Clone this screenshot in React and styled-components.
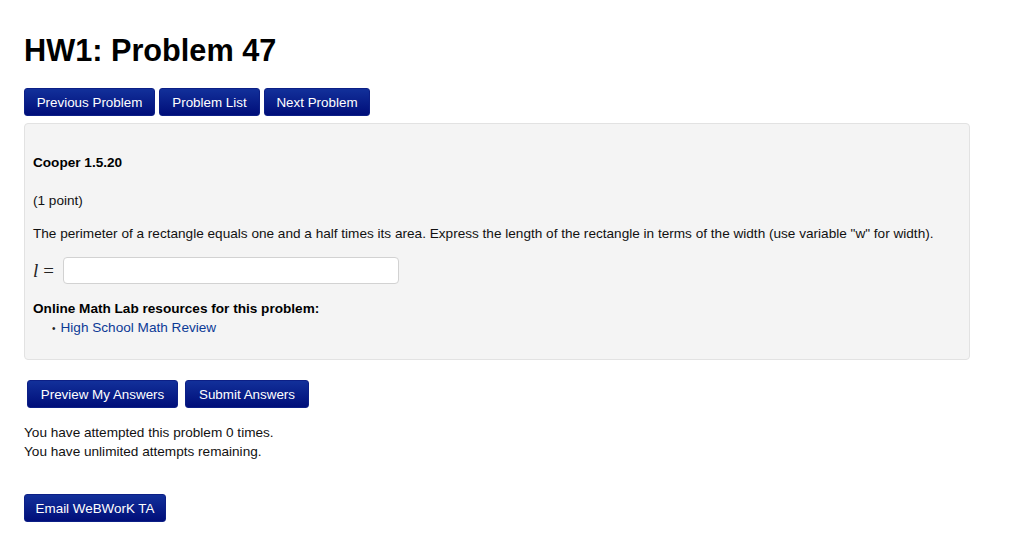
import React from 'react'
import styled, { createGlobalStyle } from 'styled-components'

const GlobalStyle = createGlobalStyle`
	body {
		margin: 0;
		background: #fff;
		font-family: "Liberation Sans", Arial, Helvetica, sans-serif;
		color: #111;
	}
`

const Page = styled.div`
	padding: 0 24px;
	font-size: 13.6px;
	line-height: 19px;
`

const Title = styled.h1`
	font-size: 30.7px;
	line-height: 36px;
	font-weight: bold;
	color: #000;
	margin: 33px 0 19px;
`

const ButtonRow = styled.div`
	display: flex;
	gap: ${props => props.gap || 4}px;
	margin: ${props => props.margin || '0'};
`

const NavButton = styled.button`
	height: 28px;
	padding: 0 8px;
	border: 1px solid #0c1f86;
	border-radius: 3px;
	background: linear-gradient(to bottom, #12309a, #000e79);
	color: #fff;
	font-family: "Liberation Sans", Arial, sans-serif;
	font-size: 13.4px;
	white-space: nowrap;
	cursor: pointer;
	width: ${props => props.width ? props.width + 'px' : 'auto'};
`

const ProblemPanel = styled.div`
	width: 946px;
	box-sizing: border-box;
	margin-top: 7px;
	padding: 29px 8px 21px;
	background: #f4f4f4;
	border: 1px solid #e2e2e2;
	border-radius: 4px;
`

const Bold = styled.div`
	font-weight: bold;
	color: #000;
	margin-top: ${props => props.top || 0}px;
`

const Para = styled.div`
	margin-top: ${props => props.top || 0}px;
`

const AnswerRow = styled.div`
	display: flex;
	align-items: center;
	height: 27px;
	margin-top: 14px;
`

const MathLabel = styled.span`
	font-family: "Liberation Serif", "Times New Roman", serif;
	font-size: 19px;
	width: 30px;
	color: #222;
	i {
		margin-right: 5px;
	}
`

const AnswerInput = styled.input`
	width: 336px;
	height: 27px;
	box-sizing: border-box;
	border: 1px solid #d2d2d2;
	border-radius: 4px;
	background: #fff;
	padding: 0 6px;
	font-size: 13px;
	outline: none;
`

const ResourceList = styled.ul`
	list-style: none;
	margin: 0;
	padding: 0 0 0 19px;
	li::before {
		content: '•';
		font-size: 10px;
		margin-right: 5px;
		color: #222;
	}
`

const Link = styled.a`
	color: #0c3a96;
	text-decoration: none;
`

const Attempts = styled.div`
	margin-top: 15px;
	color: #111;
`

const Footer = styled.div`
	margin-top: 33px;
`

export default function App() {
	return (
		<Page>
			<GlobalStyle />
			<Title>HW1: Problem 47</Title>
			<ButtonRow>
				<NavButton width={131}>Previous Problem</NavButton>
				<NavButton width={101}>Problem List</NavButton>
				<NavButton width={106}>Next Problem</NavButton>
			</ButtonRow>
			<ProblemPanel>
				<Bold>Cooper 1.5.20</Bold>
				<Para top={19}>(1 point)</Para>
				<Para top={14}>
					The perimeter of a rectangle equals one and a half times its area. Express the length of the rectangle in terms of the width (use variable "w" for width).
				</Para>
				<AnswerRow>
					<MathLabel><i>l</i>=</MathLabel>
					<AnswerInput type="text" />
				</AnswerRow>
				<Bold top={15}>Online Math Lab resources for this problem:</Bold>
				<ResourceList>
					<li><Link href="#">High School Math Review</Link></li>
				</ResourceList>
			</ProblemPanel>
			<ButtonRow gap={7} margin="20px 0 0 3px">
				<NavButton width={151}>Preview My Answers</NavButton>
				<NavButton width={124}>Submit Answers</NavButton>
			</ButtonRow>
			<Attempts>
				You have attempted this problem 0 times.<br />
				You have unlimited attempts remaining.
			</Attempts>
			<Footer>
				<NavButton width={142}>Email WeBWorK TA</NavButton>
			</Footer>
		</Page>
	)
}
